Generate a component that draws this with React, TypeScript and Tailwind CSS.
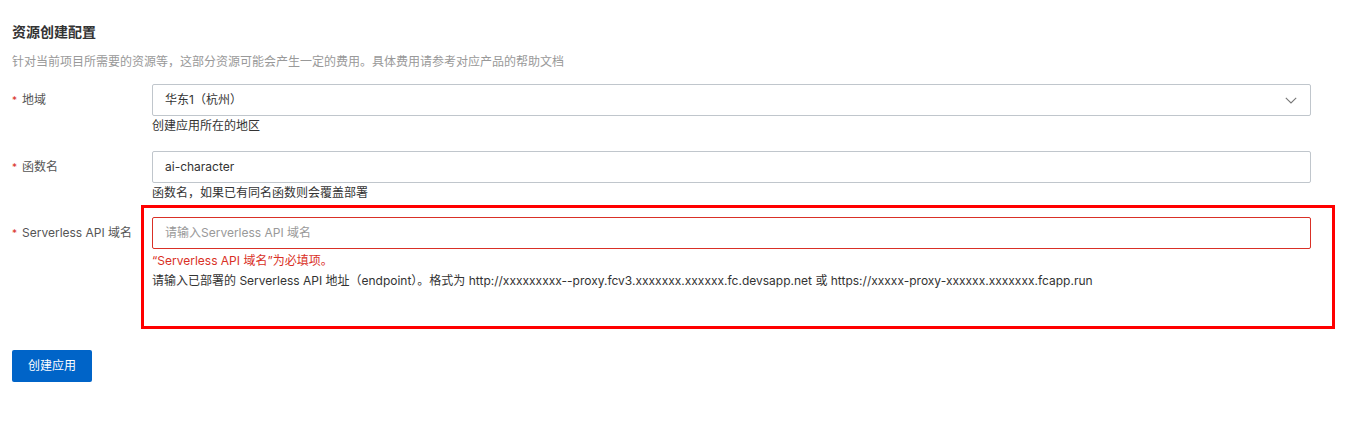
import React from 'react';

const font = "font-['Inter','Noto_Sans_CJK_SC',sans-serif]";

const Label = ({ text }: { text: string }) => (
  <div className="w-[140px] shrink-0 h-8 flex items-center text-xs text-[#555]">
    <span className="text-[#d93026] mr-[5px] text-[10px] leading-none">*</span>
    <span>{text}</span>
  </div>
);

export default function App() {
  return (
    <div className={`${font} bg-white min-h-[446px] pl-3 pr-[39px] pt-[22px] text-[#333]`}>
      <h2 className="text-sm font-semibold leading-5 text-[#333]">资源创建配置</h2>
      <p className="mt-[10px] text-xs leading-5 text-[#999]">
        针对当前项目所需要的资源等，这部分资源可能会产生一定的费用。具体费用请参考对应产品的帮助文档
      </p>

      {/* 地域 */}
      <div className="flex mt-3">
        <Label text="地域" />
        <div className="flex-1">
          <div className="h-8 border border-[#c0c6cc] rounded-[2px] flex items-center justify-between px-3 text-xs text-[#333]">
            <span>华东1（杭州）</span>
            <svg width="12" height="7" viewBox="0 0 12 7" fill="none" className="mr-[1px]">
              <path d="M0.8 0.8 L6 6 L11.2 0.8" stroke="#777" strokeWidth="1.1" />
            </svg>
          </div>
          <div className="text-xs leading-[19px] text-[#333]">创建应用所在的地区</div>
        </div>
      </div>

      {/* 函数名 */}
      <div className="flex mt-4">
        <Label text="函数名" />
        <div className="flex-1">
          <div className="h-8 border border-[#c0c6cc] rounded-[2px] flex items-center px-3 text-xs text-[#333]">
            ai-character
          </div>
          <div className="text-xs leading-[19px] text-[#333]">函数名，如果已有同名函数则会覆盖部署</div>
        </div>
      </div>

      {/* Serverless API 域名 */}
      <div className="flex mt-[15px]">
        <Label text="Serverless API 域名" />
        <div className="flex-1 relative">
          <div className="h-8 border border-[#d93026] rounded-[2px] flex items-center px-3 text-xs text-[#999]">
            请输入Serverless API 域名
          </div>
          <div className="text-xs leading-5 mt-[2px] text-[#d93026]">“Serverless API 域名”为必填项。</div>
          <div className="text-xs leading-5 text-[#333]">
            请输入已部署的 Serverless API 地址（endpoint）。格式为 http://xxxxxxxxx--proxy.fcv3.xxxxxxx.xxxxxx.fc.devsapp.net 或 https://xxxxx-proxy-xxxxxx.xxxxxxx.fcapp.run
          </div>
          <div className="absolute left-[-11px] top-[-12px] w-[1194px] h-[124px] border-[3px] border-[#ff0000] pointer-events-none" />
        </div>
      </div>

      <button className="mt-[59px] w-20 h-8 rounded-[2px] bg-[#0064c8] text-white text-xs">创建应用</button>
    </div>
  );
}
